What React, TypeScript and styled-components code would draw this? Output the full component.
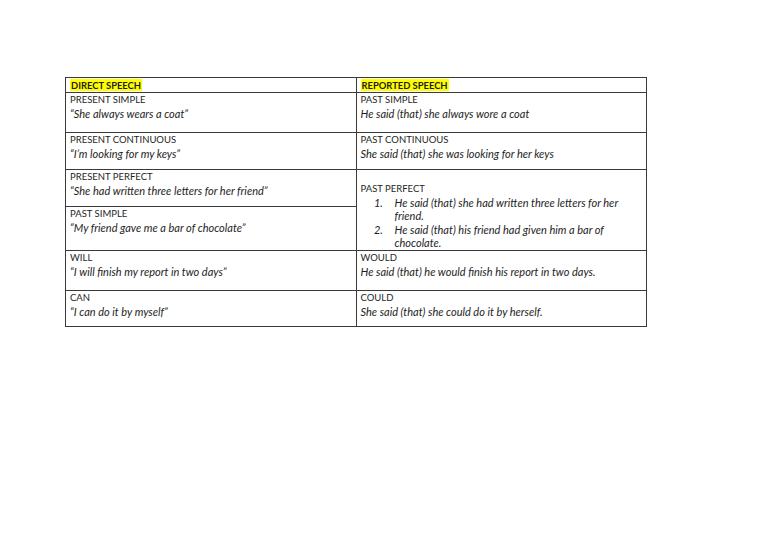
import React from 'react';
import styled, { createGlobalStyle } from 'styled-components';

const GlobalStyle = createGlobalStyle`
	html, body {
		margin: 0;
		padding: 0;
		background: #ffffff;
	}
	body {
		font-family: Lato, 'Liberation Sans', sans-serif;
		color: #1e1e1e;
	}
`;

const Page = styled.div`
	width: 768px;
	height: 543px;
	padding: 77px 0 0 65px;
	box-sizing: border-box;
`;

const Table = styled.table`
	width: 582px;
	border-collapse: collapse;
	table-layout: fixed;
	font-size: 11px;
	line-height: 13.5px;
`;

const Row = styled.tr<{ $h: number }>`
	height: ${(p) => p.$h}px;
`;

const Cell = styled.td<{ $top?: number }>`
	border: 1px solid #3a3a3a;
	padding: ${(p) => p.$top ?? 0}px 4px 0 4px;
	vertical-align: top;
	width: 50%;
	overflow: hidden;
`;

const HeadCell = styled(Cell)`
	line-height: 12px;
	padding-top: 1px;
`;

const Highlight = styled.span`
	background: #ffff00;
	font-weight: 700;
	font-size: 9.4px;
	padding: 1px 1px 0;
`;

const Tense = styled.div`
	text-transform: uppercase;
	font-size: 9.5px;
`;

const Example = styled.div`
	font-style: italic;
`;

const List = styled.ol`
	margin: 0;
	padding: 0 0 0 25px;
	font-style: italic;
	li {
		padding-left: 9px;
	}
`;

type Pair = { tense: string; example: string; h: number };

const top: { left: Pair; right: Pair }[] = [
	{
		left: { tense: 'Present simple', example: '“She always wears a coat”', h: 40 },
		right: { tense: 'Past simple', example: 'He said (that) she always wore a coat', h: 40 },
	},
	{
		left: { tense: 'Present continuous', example: '“I’m looking for my keys”', h: 37 },
		right: { tense: 'Past continuous', example: 'She said (that) she was looking for her keys', h: 37 },
	},
];

const bottom: { left: Pair; right: Pair }[] = [
	{
		left: { tense: 'Will', example: '“I will finish my report in two days”', h: 40 },
		right: { tense: 'Would', example: 'He said (that) he would finish his report in two days.', h: 40 },
	},
	{
		left: { tense: 'Can', example: '“I can do it by myself”', h: 36 },
		right: { tense: 'Could', example: 'She said (that) she could do it by herself.', h: 36 },
	},
];

const PairCell: React.FC<{ item: Pair }> = ({ item }) => (
	<Cell>
		<Tense>{item.tense}</Tense>
		<Example>{item.example}</Example>
	</Cell>
);

const App: React.FC = () => {
	return (
		<Page>
			<GlobalStyle />
			<Table>
				<tbody>
					<Row $h={13}>
						<HeadCell>
							<Highlight>DIRECT SPEECH</Highlight>
						</HeadCell>
						<HeadCell>
							<Highlight>REPORTED SPEECH</Highlight>
						</HeadCell>
					</Row>
					{top.map((r) => (
						<Row $h={r.left.h} key={r.left.tense}>
							<PairCell item={r.left} />
							<PairCell item={r.right} />
						</Row>
					))}
					<Row $h={37}>
						<PairCell item={{ tense: 'Present perfect', example: '“She had written three letters for her friend”', h: 37 }} />
						<Cell rowSpan={2} $top={12}>
							<Tense>Past perfect</Tense>
							<List>
								<li>He said (that) she had written three letters for her friend.</li>
								<li>He said (that) his friend had given him a bar of chocolate.</li>
							</List>
						</Cell>
					</Row>
					<Row $h={44}>
						<PairCell item={{ tense: 'Past simple', example: '“My friend gave me a bar of chocolate”', h: 44 }} />
					</Row>
					{bottom.map((r) => (
						<Row $h={r.left.h} key={r.left.tense}>
							<PairCell item={r.left} />
							<PairCell item={r.right} />
						</Row>
					))}
				</tbody>
			</Table>
		</Page>
	);
};

export default App;
